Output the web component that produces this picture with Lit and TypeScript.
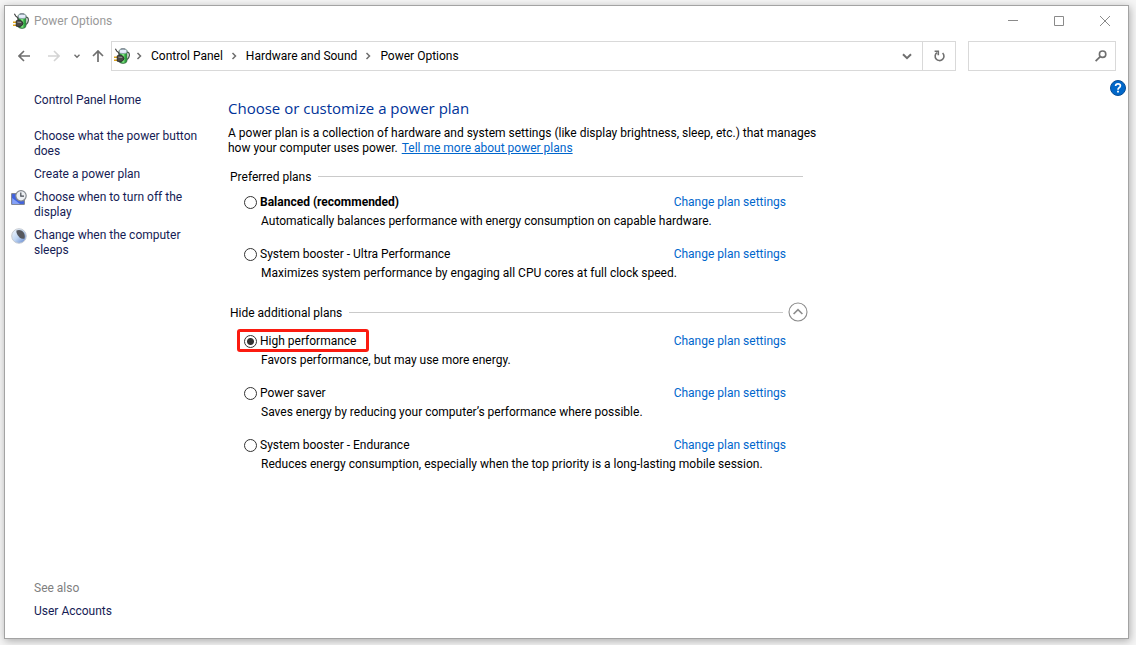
import { LitElement, html, css, nothing } from "lit";
import { customElement, state } from "lit/decorators.js";

interface Plan {
  id: string;
  name: string;
  description: string;
  recommended?: boolean;
  highlighted?: boolean;
}

const PREFERRED: Plan[] = [
  {
    id: "balanced",
    name: "Balanced (recommended)",
    description: "Automatically balances performance with energy consumption on capable hardware.",
    recommended: true,
  },
  {
    id: "ultra",
    name: "System booster - Ultra Performance",
    description: "Maximizes system performance by engaging all CPU cores at full clock speed.",
  },
];

const ADDITIONAL: Plan[] = [
  {
    id: "high",
    name: "High performance",
    description: "Favors performance, but may use more energy.",
    highlighted: true,
  },
  {
    id: "saver",
    name: "Power saver",
    description: "Saves energy by reducing your computer’s performance where possible.",
  },
  {
    id: "endurance",
    name: "System booster - Endurance",
    description: "Reduces energy consumption, especially when the top priority is a long-lasting mobile session.",
  },
];

const CRUMBS = ["Control Panel", "Hardware and Sound", "Power Options"];

const batteryIcon = html`<svg width="16" height="16" viewBox="0 0 16 16" aria-hidden="true">
  <path d="M12.6 4.2 Q15.6 4 15.3 7.6 Q15 10 13.2 11.4" fill="none" stroke="#4a5650" stroke-width="1.3" />
  <path d="M5.2 2.6 Q5.4 1 9 1 Q12.8 1 13 2.6 L13 13 Q12.8 15.4 9 15.4 Q5.2 15.4 5.2 13Z" fill="#2fa540" stroke="#35603d" stroke-width=".7" />
  <path d="M7.8 6 L10.4 6 L10.4 14.8 L7.8 14.6Z" fill="#7fdf80" />
  <path d="M5.5 2.7 Q5.6 1 9 1 Q12.6 1 12.7 2.7 L12.7 5 Q9 6 5.5 5Z" fill="#e6ecfa" stroke="#8993a8" stroke-width=".6" />
  <path d="M6.8 .9H11.2" stroke="#5c6474" stroke-width=".8" />
  <path d="M1.4 .8 L2.8 3.2 L4.6 4.4 L5.2 7" fill="none" stroke="#444" stroke-width="1.2" />
  <path d="M0 9.2H4M0 12.2H4" stroke="#dba21a" stroke-width="1.5" />
  <path d="M3.2 7.8 L6 7 L9 8.2 Q11 10.4 9 12.6 L6 14 L3.2 13.2Z" fill="#484848" stroke="#1d1d1d" stroke-width=".7" />
  <path d="M4.4 9.2 L8.2 9.4" stroke="#9a9a9a" stroke-width="1" />
</svg>`;

const displayIcon = html`<svg width="16" height="16" viewBox="0 0 16 16" aria-hidden="true">
  <path d="M.6 3.6H13.4V14.4H.6Z" fill="#3f62e0" stroke="#7d818c" />
  <path d="M1.2 14V8L9 14Z" fill="#86a2f6" />
  <circle cx="10" cy="5.8" r="5.2" fill="#eceff3" stroke="#85898f" stroke-width="1.2" />
  <path d="M9.8 2.4V6.2H13" fill="none" stroke="#474c54" stroke-width="1.2" />
</svg>`;

const moonIcon = html`<svg width="16" height="16" viewBox="0 0 16 16" aria-hidden="true">
  <defs>
    <linearGradient id="moon" x1="0" y1="0" x2="1" y2="1">
      <stop offset="0" stop-color="#f6fafd" />
      <stop offset=".5" stop-color="#bfd5f2" />
      <stop offset="1" stop-color="#5a80cc" />
    </linearGradient>
  </defs>
  <circle cx="8" cy="8" r="7.3" fill="url(#moon)" stroke="#c6cbd2" stroke-width="1" />
  <path d="M5.4 2.6 Q8 1.2 11 2.8 Q14.6 5.4 13.6 10.4 Q11 11.6 8.4 9.2 Q5 6 5.4 2.6Z" fill="#56585e" />
</svg>`;

const chevronRight = html`<svg width="7" height="8" viewBox="0 0 7 8" aria-hidden="true">
  <path d="M1.5 1L4.5 4L1.5 7" fill="none" stroke="#6e6e6e" stroke-width="1.5" />
</svg>`;

@customElement("power-plan")
export class PowerPlan extends LitElement {
  static properties = { plan: { attribute: false }, checked: { type: Boolean } };
  declare plan: Plan;
  declare checked: boolean;

  static styles = css`
    :host {
      display: block;
      height: 36px;
      line-height: 15px;
    }
    .row {
      display: flex;
      align-items: center;
      justify-content: space-between;
      height: 18px;
    }
    .choice {
      position: relative;
      display: flex;
      align-items: center;
      gap: 3px;
    }
    .choice.recommended {
      font-weight: 700;
    }
    .choice.highlighted::after {
      content: "";
      position: absolute;
      inset: -5px -13px -3px -7px;
      border: 3px solid #fb1b10;
      border-radius: 3px;
    }
    .radio {
      appearance: none;
      box-sizing: border-box;
      width: 13px;
      height: 13px;
      margin: 0;
      border: 1px solid #333;
      border-radius: 50%;
      background: #fff;
    }
    .radio:checked {
      background: radial-gradient(circle, #333 0 3px, #fff 4px);
    }
    .settings {
      color: #0066cc;
      text-decoration: none;
    }
    .settings:hover {
      text-decoration: underline;
    }
    .description {
      margin: 3px 0 0 17px;
      white-space: nowrap;
    }
  `;

  private pick() {
    this.dispatchEvent(new CustomEvent("pick", { detail: this.plan.id }));
  }

  render() {
    const { plan } = this;
    return html`
      <div class="row">
        <label class="choice ${plan.recommended ? "recommended" : ""} ${plan.highlighted ? "highlighted" : ""}">
          <input class="radio" type="radio" .checked=${this.checked} @change=${this.pick} />
          <span>${plan.name}</span>
        </label>
        <a class="settings" href="#${plan.id}">Change plan settings</a>
      </div>
      <p class="description">${plan.description}</p>
    `;
  }
}

@customElement("app-root")
export class AppRoot extends LitElement {
  @state() private selected = "high";
  @state() private expanded = true;

  static styles = css`
    :host {
      display: flex;
      box-sizing: border-box;
      min-height: 100vh;
      padding: 5px 7px 6px 4px;
      background: #f5f5f5;
      color: #000;
      font-family: Roboto, "Open Sans", sans-serif;
      font-size: 12px;
      line-height: 15px;
    }
    svg {
      display: block;
      flex: none;
    }
    button {
      display: flex;
      flex: none;
      align-items: center;
      justify-content: center;
      padding: 0;
      border: 0;
      background: none;
      font: inherit;
    }
    a {
      text-decoration: none;
    }
    .window {
      flex: 1;
      display: flex;
      flex-direction: column;
      border: 1px solid #a3a3a3;
      background: #fff;
      box-shadow: 1px 2px 8px rgba(0, 0, 0, 0.3);
    }
    .titlebar {
      display: flex;
      align-items: center;
      height: 30px;
      padding-left: 8px;
      gap: 5px;
      color: #999;
    }
    .title {
      flex: 1;
      margin: 0;
      font-size: 12px;
      font-weight: 400;
    }
    .caption {
      display: flex;
    }
    .caption button {
      width: 46px;
      height: 30px;
    }
    .navbar {
      display: flex;
      align-items: center;
      height: 30px;
      margin: 5px 12px 0 9px;
    }
    .arrows {
      display: flex;
      align-items: center;
      width: 97px;
    }
    .arrows button {
      height: 28px;
    }
    .wide {
      width: 20px;
      margin-right: 10px;
    }
    .recent {
      width: 6px;
      margin-right: 8px;
    }
    .address {
      flex: 1;
      display: flex;
      box-sizing: border-box;
      height: 30px;
      border: 1px solid #d9d9d9;
    }
    .location {
      flex: 1;
      display: flex;
      align-items: center;
      gap: 6px;
      padding-left: 2px;
    }
    .crumbs {
      display: flex;
      align-items: center;
      gap: 8px;
    }
    .crumbs a {
      color: #000;
    }
    .drop {
      width: 30px;
    }
    .address .refresh {
      width: 33px;
      border-left: 1px solid #d9d9d9;
    }
    .search {
      display: flex;
      align-items: center;
      box-sizing: border-box;
      width: 148px;
      height: 30px;
      margin-left: 12px;
      padding-right: 8px;
      border: 1px solid #d9d9d9;
    }
    .search input {
      flex: 1;
      min-width: 0;
      border: 0;
      outline: 0;
      background: none;
      font: inherit;
    }
    .body {
      position: relative;
      flex: 1;
      display: flex;
    }
    .help {
      position: absolute;
      top: 9px;
      right: 2px;
    }
    .sidebar {
      display: flex;
      flex-direction: column;
      justify-content: space-between;
      box-sizing: border-box;
      width: 223px;
      padding: 22px 24px 19px 6px;
    }
    .links {
      display: flex;
      flex-direction: column;
      gap: 8px;
    }
    .sidebar a {
      display: flex;
      gap: 7px;
      color: #151c55;
    }
    .sidebar .plain {
      padding-left: 23px;
    }
    .home {
      margin-bottom: 13px;
    }
    .also {
      margin: 0;
      padding-left: 23px;
      color: #808080;
    }
    .main {
      width: 580px;
      padding-top: 26px;
    }
    .heading {
      margin: 0;
      color: #003399;
      font-family: "Open Sans", sans-serif;
      font-size: 15px;
      font-weight: 400;
      line-height: 22px;
    }
    .intro {
      display: flex;
      flex-direction: column;
      margin: 7px 0 10px;
      white-space: nowrap;
    }
    .sentence {
      display: flex;
      gap: 4px;
    }
    .intro a {
      color: #0066cc;
      text-decoration: underline;
    }
    .group {
      display: flex;
      align-items: center;
      height: 20px;
      padding-left: 2px;
      gap: 7px;
    }
    .group h2 {
      margin: 0;
      padding-top: 2px;
      font-size: 12px;
      font-weight: 400;
    }
    .rule {
      flex: 1;
      height: 1px;
      margin-right: 5px;
      background: #cacaca;
    }
    .group .rule:not(:last-child) {
      margin-right: -2px;
    }
    .plans {
      display: flex;
      flex-direction: column;
      gap: 16px;
      margin: 7px 22px 21px 16px;
    }
    .plans.extra {
      margin-top: 10px;
    }
  `;

  private renderPlans(plans: Plan[], extra = false) {
    return html`<div class="plans ${extra ? "extra" : ""}" role="radiogroup">
      ${plans.map(
        (plan) => html`<power-plan
          .plan=${plan}
          .checked=${this.selected === plan.id}
          @pick=${(e: CustomEvent<string>) => (this.selected = e.detail)}
        ></power-plan>`
      )}
    </div>`;
  }

  render() {
    return html`
      <div class="window">
        <header class="titlebar">
          ${batteryIcon}
          <h1 class="title">Power Options</h1>
          <div class="caption">
            <button aria-label="Minimize">
              <svg width="10" height="10"><path d="M0 4.5H10" stroke="#8a8a8a" /></svg>
            </button>
            <button aria-label="Maximize">
              <svg width="10" height="10"><path d="M.5 .5H9.5V9.5H.5Z" fill="none" stroke="#8a8a8a" /></svg>
            </button>
            <button aria-label="Close">
              <svg width="10" height="10"><path d="M0 0L10 10M10 0L0 10" stroke="#8a8a8a" /></svg>
            </button>
          </div>
        </header>

        <nav class="navbar">
          <div class="arrows">
            <button class="wide" aria-label="Back">
              <svg width="12" height="12"><path d="M12 6H1.4M6 1L1 6L6 11" fill="none" stroke="#6f6f6f" stroke-width="1.6" /></svg>
            </button>
            <button class="wide" aria-label="Forward">
              <svg width="12" height="12"><path d="M0 6H10.6M6 1L11 6L6 11" fill="none" stroke="#d4d4d4" stroke-width="1.6" /></svg>
            </button>
            <button class="recent" aria-label="Recent locations">
              <svg width="6" height="5"><path d="M.5 .8L3 3.3L5.5 .8" fill="none" stroke="#6f6f6f" stroke-width="1.4" /></svg>
            </button>
            <button class="wide" aria-label="Up">
              <svg width="12" height="12"><path d="M6 12V1.4M1 6L6 1L11 6" fill="none" stroke="#6f6f6f" stroke-width="1.7" /></svg>
            </button>
          </div>
          <div class="address">
            <div class="location">
              ${batteryIcon}
              <div class="crumbs">${CRUMBS.map((c) => html`${chevronRight}<a href="#">${c}</a>`)}</div>
            </div>
            <button class="drop" aria-label="Previous locations">
              <svg width="10" height="7"><path d="M1 1.2L5 5.2L9 1.2" fill="none" stroke="#6f6f6f" stroke-width="2" /></svg>
            </button>
            <button class="refresh" aria-label="Refresh">
              <svg width="12" height="12" viewBox="0 0 12 12">
                <path d="M9.6 3A4.4 4.4 0 1 1 4 2.6" fill="none" stroke="#6f6f6f" stroke-width="1.6" />
                <path d="M1.6 1.2H5.3V5.2" fill="none" stroke="#6f6f6f" stroke-width="1.6" />
              </svg>
            </button>
          </div>
          <label class="search">
            <input type="text" aria-label="Search Control Panel" />
            <svg width="12" height="12" viewBox="0 0 12 12">
              <circle cx="7.6" cy="4.2" r="3.2" fill="none" stroke="#6f6f6f" stroke-width="1.6" />
              <path d="M5.2 6.6L.6 11.2" stroke="#6f6f6f" stroke-width="1.8" />
            </svg>
          </label>
        </nav>

        <div class="body">
          <aside class="sidebar">
            <div class="links">
              <a class="plain home" href="#">Control Panel Home</a>
              <a class="plain" href="#">Choose what the power button does</a>
              <a class="plain" href="#">Create a power plan</a>
              <a href="#">${displayIcon}<span>Choose when to turn off the display</span></a>
              <a href="#">${moonIcon}<span>Change when the computer sleeps</span></a>
            </div>
            <div class="links">
              <p class="also">See also</p>
              <a class="plain" href="#">User Accounts</a>
            </div>
          </aside>

          <main class="main">
            <h2 class="heading">Choose or customize a power plan</h2>
            <div class="intro">
              <span>A power plan is a collection of hardware and system settings (like display brightness, sleep, etc.) that manages</span>
              <div class="sentence">
                <span>how your computer uses power.</span>
                <a href="#">Tell me more about power plans</a>
              </div>
            </div>
            <div class="group">
              <h2>Preferred plans</h2>
              <span class="rule"></span>
            </div>
            ${this.renderPlans(PREFERRED)}
            <div class="group">
              <h2>Hide additional plans</h2>
              <span class="rule"></span>
              <button aria-label="Toggle additional plans" @click=${() => (this.expanded = !this.expanded)}>
                <svg width="20" height="20">
                  <circle cx="10" cy="10" r="9" fill="none" stroke="#8c8c8c" stroke-width="1.1" />
                  <path d="M5.6 12L10 7.6L14.4 12" fill="none" stroke="#8c8c8c" stroke-width="1.6" />
                </svg>
              </button>
            </div>
            ${this.expanded ? this.renderPlans(ADDITIONAL, true) : nothing}
          </main>

          <button class="help" aria-label="Help">
            <svg width="16" height="16" viewBox="0 0 16 16">
              <circle cx="8" cy="8" r="7.5" fill="#0067c9" stroke="#0b4e94" />
              <path d="M5.6 6.1Q5.6 3.8 8 3.8Q10.4 3.8 10.4 5.8Q10.4 7 9.1 7.8Q8 8.5 8 9.7" fill="none" stroke="#fff" stroke-width="1.7" />
              <path d="M7.1 10.8H8.9V12.6H7.1Z" fill="#fff" />
            </svg>
          </button>
        </div>
      </div>
    `;
  }
}
